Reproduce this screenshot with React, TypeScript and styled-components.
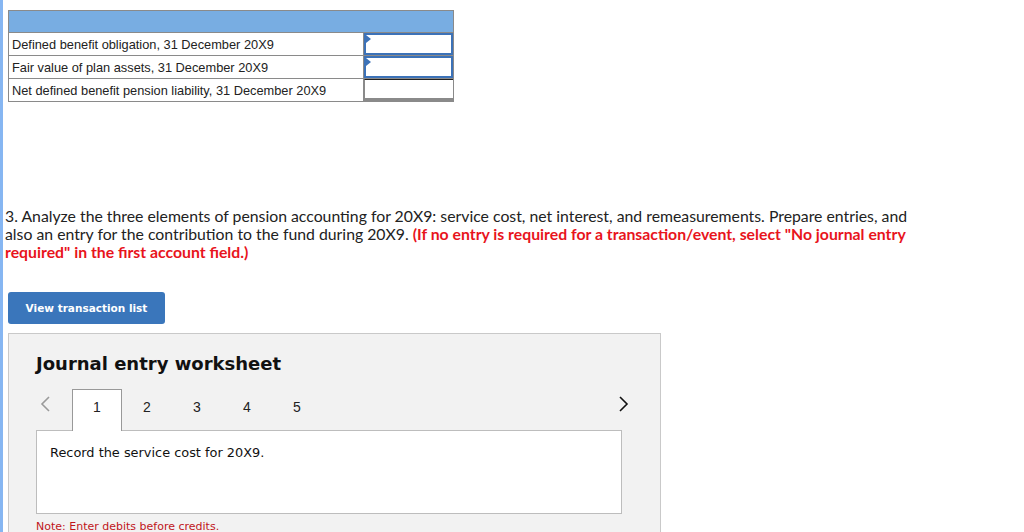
import React from 'react'
import styled, { createGlobalStyle } from 'styled-components'

const GlobalStyle = createGlobalStyle`
  html, body {
    margin: 0;
    padding: 0;
    background: #fff;
  }
  body {
    font-family: "Liberation Sans", Arial, sans-serif;
    overflow: hidden;
  }
`

const rows = [
  { label: 'Defined benefit obligation, 31 December 20X9', editable: true },
  { label: 'Fair value of plan assets, 31 December 20X9', editable: true },
  { label: 'Net defined benefit pension liability, 31 December 20X9', editable: false },
]

const tabs = [1, 2, 3, 4, 5]

const App = () => {
  return (
    <>
      <GlobalStyle />
      <Page>
        <SummaryTable>
          <thead>
            <tr>
              <HeaderCell colSpan={2} />
            </tr>
          </thead>
          <tbody>
            {rows.map((row) => (
              <tr key={row.label}>
                <LabelCell>{row.label}</LabelCell>
                <InputCell>
                  <AmountInput $editable={row.editable}>
                    {row.editable && <Marker />}
                  </AmountInput>
                </InputCell>
              </tr>
            ))}
          </tbody>
        </SummaryTable>

        <Question>
          3. Analyze the three elements of pension accounting for 20X9: service cost, net interest, and
          remeasurements. Prepare entries, and also an entry for the contribution to the fund during 20X9.{' '}
          <Warning>
            (If no entry is required for a transaction/event, select "No journal entry required" in the
            first account field.)
          </Warning>
        </Question>

        <ListButton>View transaction list</ListButton>

        <Worksheet>
          <WorksheetTitle>Journal entry worksheet</WorksheetTitle>
          <TabBar>
            <Arrow $muted>
              <svg width="12" height="18" viewBox="0 0 12 18">
                <polyline points="10,2 3,9 10,16" fill="none" stroke="currentColor" strokeWidth="1.6" />
              </svg>
            </Arrow>
            <Tabs>
              {tabs.map((t) => (
                <Tab key={t} $active={t === 1}>{t}</Tab>
              ))}
            </Tabs>
            <Arrow>
              <svg width="12" height="18" viewBox="0 0 12 18">
                <polyline points="2,2 9,9 2,16" fill="none" stroke="currentColor" strokeWidth="1.6" />
              </svg>
            </Arrow>
          </TabBar>
          <EntryBox>Record the service cost for 20X9.</EntryBox>
          <Note>Note: Enter debits before credits.</Note>
        </Worksheet>
      </Page>
    </>
  )
}

const Page = styled.div`
  border-left: 3px solid #86b6f2;
  min-height: 532px;
  box-sizing: border-box;
  padding: 10px 0 0 2px;
`

const SummaryTable = styled.table`
  margin-left: 3px;
  border-collapse: collapse;
  width: 446px;
  font-size: 12.8px;
  color: #222;
`

const HeaderCell = styled.th`
  height: 21px;
  background: #78ade2;
  border: 1px solid #8a8a8a;
  padding: 0;
`

const LabelCell = styled.td`
  width: 351px;
  height: 21px;
  border: 1px solid #8a8a8a;
  padding: 0 0 0 3px;
  white-space: nowrap;
`

const InputCell = styled.td`
  padding: 0;
  border: 1px solid #8a8a8a;
  border-left: none;
  height: 22px;
`

const AmountInput = styled.div<{ $editable: boolean }>`
  position: relative;
  height: 22px;
  box-sizing: border-box;
  background: #fff;
  border: ${(p) => (p.$editable ? '2px solid #3c72b8' : 'none')};
  border-top: ${(p) => (p.$editable ? '2px solid #3c72b8' : '1px solid #222')};
  border-bottom: ${(p) => (p.$editable ? '2px solid #3c72b8' : '3px solid #8a8a8a')};
  border-left: ${(p) => (p.$editable ? '2px solid #3c72b8' : '1px solid #8a8a8a')};
`

const Marker = styled.span`
  position: absolute;
  top: 0;
  left: 0;
  width: 0;
  height: 0;
  border-top: 4px solid transparent;
  border-bottom: 4px solid transparent;
  border-left: 5px solid #3c72b8;
`

const Question = styled.p`
  margin: 105px 0 0 0;
  width: 912px;
  font-family: Lato, "Noto Sans", sans-serif;
  font-size: 15.8px;
  line-height: 18px;
  color: #222;
`

const Warning = styled.strong`
  color: #e8141c;
  font-weight: 700;
`

const ListButton = styled.button`
  display: block;
  margin: 31px 0 0 3px;
  width: 157px;
  height: 32px;
  border: none;
  border-radius: 3px;
  background: #3a76bb;
  color: #fff;
  font-family: "DejaVu Sans", Verdana, sans-serif;
  font-weight: 700;
  font-size: 10.5px;
  cursor: pointer;
`

const Worksheet = styled.section`
  margin: 9px 0 0 3px;
  width: 653px;
  height: 220px;
  box-sizing: border-box;
  background: #f2f2f2;
  border: 1px solid #c9c9c9;
  padding: 17px 0 0 27px;
`

const WorksheetTitle = styled.h2`
  margin: 0;
  font-family: "DejaVu Sans", Verdana, sans-serif;
  font-size: 18px;
  font-weight: 700;
  color: #111;
  line-height: 26px;
`

const TabBar = styled.div`
  display: flex;
  align-items: flex-end;
  width: 586px;
  margin-top: 11px;
  height: 42px;
`

const Tabs = styled.div`
  display: flex;
  margin-left: 21px;
  flex: 1;
`

const Tab = styled.div<{ $active: boolean }>`
  width: 50px;
  height: 42px;
  box-sizing: border-box;
  display: flex;
  align-items: center;
  justify-content: center;
  padding-bottom: 8px;
  font-family: "Liberation Sans", Arial, sans-serif;
  font-size: 14px;
  color: #222;
  background: ${(p) => (p.$active ? '#fff' : 'transparent')};
  border: ${(p) => (p.$active ? '1px solid #999' : '1px solid transparent')};
  border-bottom: none;
  margin-bottom: -1px;
  position: relative;
  z-index: 1;
`

const Arrow = styled.div<{ $muted?: boolean }>`
  height: 42px;
  display: flex;
  align-items: center;
  padding: 0 0 10px 3px;
  box-sizing: border-box;
  color: ${(p) => (p.$muted ? '#9a9a9a' : '#111')};
  margin-right: ${(p) => (p.$muted ? '0' : '-8px')};
`

const EntryBox = styled.div`
  width: 586px;
  height: 84px;
  box-sizing: border-box;
  background: #fff;
  border: 1px solid #bdbdbd;
  padding: 14px 0 0 13px;
  font-family: "DejaVu Sans", Verdana, sans-serif;
  font-size: 12.9px;
  color: #111;
`

const Note = styled.div`
  margin-top: 6px;
  font-family: "DejaVu Sans", Verdana, sans-serif;
  font-size: 11px;
  color: #c0151b;
`

export default App
